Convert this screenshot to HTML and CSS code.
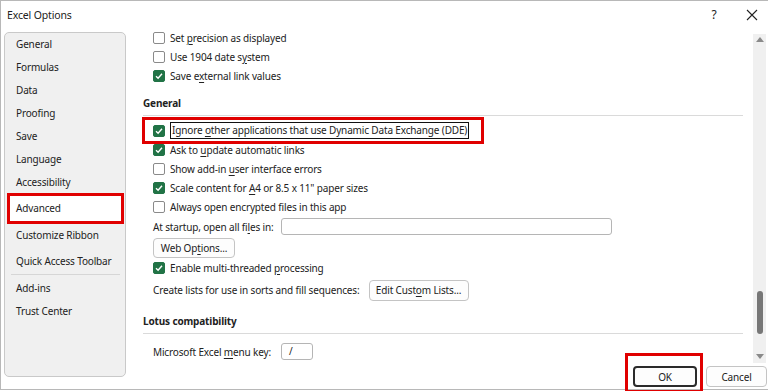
FILE: index.html
```html
<!DOCTYPE html>
<html lang="en">
<head>
  <meta charset="UTF-8">
  <title>Excel Options</title>
  <link rel="stylesheet" href="styles.css">
</head>
<body>
  <div class="window">
    <div class="titlebar">
      <span class="title">Excel Options</span>
      <span class="help">?</span>
      <span class="close">
        <svg width="12" height="12" viewBox="0 0 12 12"><path d="M1 1 L11 11 M11 1 L1 11" stroke="#222" stroke-width="1.1" fill="none"/></svg>
      </span>
    </div>

    <div class="main">
      <nav class="sidebar">
        <div class="nav-item">General</div>
        <div class="nav-item">Formulas</div>
        <div class="nav-item">Data</div>
        <div class="nav-item">Proofing</div>
        <div class="nav-item">Save</div>
        <div class="nav-item">Language</div>
        <div class="nav-item">Accessibility</div>
        <div class="nav-item marked">Advanced</div>
        <div class="nav-item">Customize Ribbon</div>
        <div class="nav-item qat">Quick Access Toolbar</div>
        <div class="nav-sep"></div>
        <div class="nav-item">Add-ins</div>
        <div class="nav-item">Trust Center</div>
      </nav>

      <div class="right">
        <div class="pane">
          <div class="scroll">
            <div class="row"><span class="cb"></span><span>Set <u>p</u>recision as displayed</span></div>
            <div class="row"><span class="cb"></span><span>Use 1904 date s<u>y</u>stem</span></div>
            <div class="row"><span class="cb on"></span><span>Save e<u>x</u>ternal link values</span></div>

            <div class="section">General</div>
            <div class="row marked"><span class="cb on"></span><span class="focus">Ignore <u>o</u>ther applications that use Dynamic Data Exchange (DDE)</span></div>
            <div class="row"><span class="cb on"></span><span>Ask to <u>u</u>pdate automatic links</span></div>
            <div class="row"><span class="cb"></span><span>Show add-in <u>u</u>ser interface errors</span></div>
            <div class="row"><span class="cb on"></span><span>Scale content for <u>A</u>4 or 8.5 x 11" paper sizes</span></div>
            <div class="row"><span class="cb"></span><span>Always open encrypted files in this app</span></div>
            <div class="row field-row">
              <span class="label startup-label">At startup, open all fi<u>l</u>es in:</span>
              <span class="textbox wide"></span>
            </div>
            <div class="row btn-row"><span class="btn web"><span>Web Op<u>t</u>ions...</span></span></div>
            <div class="row"><span class="cb on"></span><span>Enable multi-threaded <u>p</u>rocessing</span></div>
            <div class="row field-row lists">
              <span class="label">Create lists for use in sorts and fill sequences:</span>
              <span class="btn custom"><span>Edit Cust<u>o</u>m Lists...</span></span>
            </div>

            <div class="section lotus">Lotus compatibility</div>
            <div class="row field-row key">
              <span class="label">Microsoft Excel <u>m</u>enu key:</span>
              <span class="textbox small">/</span>
            </div>
          </div>

          <div class="scrollbar">
            <span class="arrow up"></span>
            <span class="thumb"></span>
            <span class="arrow down"></span>
          </div>
        </div>

        <div class="footer">
          <span class="btn ok">OK</span>
          <span class="btn cancel">Cancel</span>
        </div>
      </div>
    </div>
  </div>
</body>
</html>
```

FILE: styles.css
```css
/* Base */
*, *::before, *::after {
  box-sizing: border-box;
}
html, body {
  margin: 0;
  padding: 0;
  width: 768px;
  height: 391px;
  overflow: hidden;
  background: #ffffff;
  font-family: "Noto Sans", "Open Sans", sans-serif;
  font-size: 10px;
  letter-spacing: -0.15px;
  color: #222;
}
u {
  text-decoration-thickness: 1px;
  text-underline-offset: 2px;
}

/* Window frame */
.window {
  width: 768px;
  height: 390px;
  border-top: 1px solid #b8b8b8;
  border-left: 1px solid #b8b8b8;
  border-bottom: 1px solid #b8b8b8;
  display: flex;
  flex-direction: column;
}

.titlebar {
  height: 27px;
  display: flex;
  align-items: center;
  padding-left: 6px;
  font-size: 10.5px;
}
.title {
  flex: 1;
}
.help {
  width: 20px;
  margin-right: 22px;
  font-size: 12px;
  text-align: center;
}
.close {
  width: 14px;
  margin-right: 8px;
  display: flex;
  align-items: center;
}

.main {
  flex: 1;
  display: flex;
  min-height: 0;
}

/* Sidebar */
.sidebar {
  width: 122px;
  height: 345px;
  margin: 4px 0 0 3px;
  padding: 0 1px 0 2px;
  background: #f0f0f0;
  border: 1px solid #c9c9c9;
  border-radius: 5px;
  flex-shrink: 0;
}
.nav-item {
  height: 23px;
  line-height: 23px;
  padding-left: 9px;
  white-space: nowrap;
}
.nav-item.marked {
  height: 31px;
  line-height: 25px;
  margin: -1px 0 0 0;
  padding-left: 6px;
  background: #fff;
  border: 3px solid #e00000;
}
.nav-item.qat {
  margin-top: 3px;
}
.nav-sep {
  height: 1px;
  margin: 1px 4px 2px 4px;
  background: #d6d6d6;
}

/* Right column */
.right {
  flex: 1;
  display: flex;
  flex-direction: column;
  min-width: 0;
}
.pane {
  height: 335px;
  display: flex;
}
.scroll {
  flex: 1;
  padding: 0 10px 0 17px;
  overflow: hidden;
}

.row {
  height: 19px;
  display: flex;
  align-items: center;
  padding-left: 10px;
  white-space: nowrap;
}
.row.marked {
  width: fit-content;
  margin-left: 3px;
  padding-left: 7px;
  padding-right: 11px;
  outline: 3px solid #e00000;
  outline-offset: 1px;
  margin-top: 5px;
}
.focus {
  border: 1px solid #111;
  padding: 0 1px;
  line-height: 15px;
}

.cb {
  width: 12px;
  height: 12px;
  margin-right: 5px;
  border: 1px solid #8a8a8a;
  border-radius: 2px;
  background: #fff;
  flex-shrink: 0;
}
.cb.on {
  border-color: #217346;
  background: #217346 url("data:image/svg+xml;utf8,<svg xmlns='http://www.w3.org/2000/svg' width='10' height='10' viewBox='0 0 10 10'><path d='M2 5.2 L4.1 7.2 L8 2.8' stroke='white' stroke-width='1.4' fill='none'/></svg>") center / 10px 10px no-repeat;
}

.section {
  height: 18px;
  line-height: 18px;
  margin-top: 9px;
  padding-bottom: 3px;
  box-sizing: content-box;
  border-bottom: 1px solid #dadada;
  font-weight: 700;
}
.section.lotus {
  margin-top: 10px;
}

.field-row {
  height: 21px;
}
.label {
  margin-right: 9px;
}
.startup-label {
  margin-right: 7px;
}
.textbox {
  height: 17px;
  border: 1px solid #b5b5b5;
  border-radius: 3px;
  background: #fff;
  line-height: 15px;
  padding-left: 7px;
}
.textbox.wide {
  width: 331px;
}
.textbox.small {
  width: 32px;
  margin-left: 1px;
}

.btn {
  display: inline-flex;
  align-items: center;
  justify-content: center;
  border: 1px solid #c4c4c4;
  border-radius: 4px;
  background: #fdfdfd;
  white-space: nowrap;
}
.btn-row {
  height: 21px;
  align-items: flex-end;
}
.btn.web {
  width: 82px;
  height: 20px;
}
.row.lists {
  height: 24px;
  margin-top: 1px;
}
.btn.custom {
  width: 100px;
  height: 21px;
}
.row.key {
  margin-top: 7px;
}

/* Scrollbar */
.scrollbar {
  width: 13px;
  margin: 6px 2px 0 0;
  background: #f0f0f0;
  display: flex;
  flex-direction: column;
  align-items: center;
  flex-shrink: 0;
}
.arrow {
  width: 0;
  height: 0;
  border-left: 4px solid transparent;
  border-right: 4px solid transparent;
}
.arrow.up {
  margin-top: 3px;
  border-bottom: 5px solid #8a8a8a;
}
.arrow.down {
  margin-top: auto;
  margin-bottom: 4px;
  border-top: 5px solid #8a8a8a;
}
.thumb {
  width: 6px;
  height: 43px;
  margin-top: 249px;
  background: #777;
  border-radius: 3px;
}

/* Footer buttons */
.footer {
  display: flex;
  justify-content: flex-end;
  gap: 9px;
  padding: 3px 1px 0 0;
}
.btn.ok {
  position: relative;
  width: 64px;
  height: 21px;
  border: 2px solid #2b2b2b;
}
/* red annotation frame around OK */
.btn.ok::before {
  content: "";
  position: absolute;
  left: -10px;
  top: -15px;
  width: 78px;
  height: 40px;
  border: 3px solid #e00000;
}
.btn.cancel {
  width: 61px;
  height: 21px;
}
```
